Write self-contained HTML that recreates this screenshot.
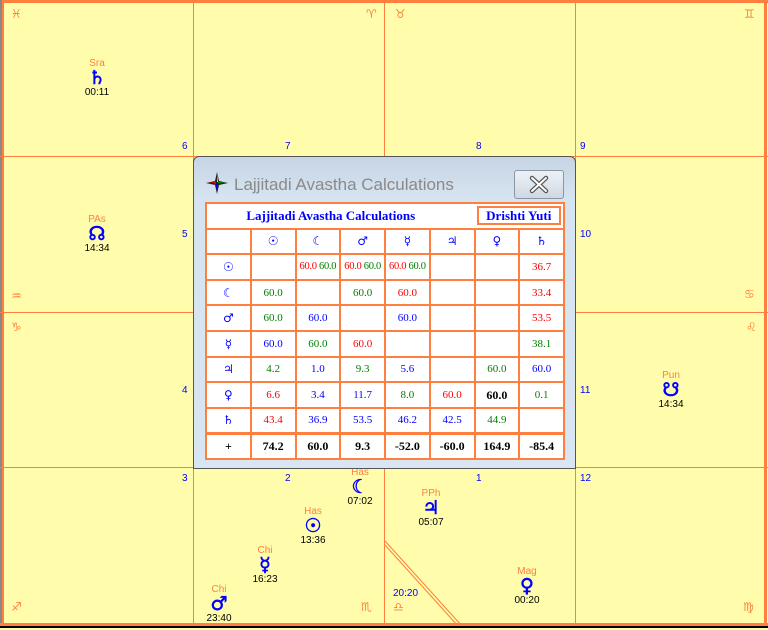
<!DOCTYPE html>
<html><head><meta charset="utf-8"><style>
*{margin:0;padding:0;box-sizing:border-box}
body{width:768px;height:628px;overflow:hidden;background:#fffdab;position:relative;font-family:"Liberation Sans","DejaVu Sans",sans-serif}
.l{position:absolute;background:#ff7f3f}
.t{position:absolute;transform:translateX(-50%);white-space:nowrap;text-align:center}
.n{position:absolute;font-size:10px;color:#0000ff}
.s{position:absolute;color:#ff8040;font-size:12px;font-family:"DejaVu Sans",sans-serif}
.lab{font-size:10px;color:#ff8040;line-height:11px}
.pl{font-size:19px;color:#0000ff;font-weight:bold;font-family:"DejaVu Sans",sans-serif;line-height:18px;-webkit-text-stroke:0.6px #0000ff}
.tm{font-size:10px;color:#000;line-height:12px}
#dlg{position:absolute;left:193px;top:156px;width:383px;height:313px;background:linear-gradient(#c6d4e4,#d6e3f0 40px,#d8e5f2);border:1px solid #555;border-radius:6px 6px 0 0}
table{position:absolute;left:11px;top:45px;border-collapse:collapse;background:#fff;font-family:"Liberation Serif","DejaVu Serif",serif;table-layout:fixed;width:360px}
td{border:2px solid #ff7f3f;height:25.6px;text-align:center;font-size:11px;padding:0;line-height:12px;white-space:nowrap;overflow:hidden}
.r{color:#ff0000}.g{color:#008000}.b{color:#0000ff}.k{color:#000;font-weight:bold;font-size:12px}
.sy{color:#0000ff;font-family:"DejaVu Sans",sans-serif;font-size:12px}
.sm{font-size:10.5px;letter-spacing:-0.3px}
</style></head><body>
<div class="l" style="left:0;top:0;width:768px;height:3px"></div>
<div class="l" style="left:0;top:0;width:2px;height:628px;background:#888"></div>
<div class="l" style="left:2px;top:0;width:2px;height:626px"></div>
<div class="l" style="left:764px;top:0;width:3px;height:626px"></div>
<div class="l" style="left:0;top:623px;width:768px;height:3px"></div>
<div class="l" style="left:0;top:626px;width:768px;height:2px;background:#000"></div>
<div class="l" style="left:193px;top:0;width:1px;height:626px"></div>
<div class="l" style="left:384px;top:0;width:1px;height:626px"></div>
<div class="l" style="left:575px;top:0;width:1px;height:626px"></div>
<div class="l" style="left:0;top:156px;width:768px;height:1px"></div>
<div class="l" style="left:0;top:312px;width:768px;height:1px"></div>
<div class="l" style="left:0;top:467px;width:768px;height:1px"></div>
<svg style="position:absolute;left:384px;top:540px" width="80" height="90"><path d="M1 5 L74 86 M1 1 L78 86" stroke="#ff7f3f" stroke-width="1" fill="none"/></svg>

<div class="s" style="left:11px;top:7px">♓</div>
<div class="s" style="left:366px;top:7px">♈</div>
<div class="s" style="left:395px;top:7px">♉</div>
<div class="s" style="left:744px;top:7px">♊</div>
<div class="s" style="left:11px;top:289px">♒</div>
<div class="s" style="left:744px;top:287px">♋</div>
<div class="s" style="left:11px;top:320px">♑</div>
<div class="s" style="left:746px;top:320px">♌</div>
<div class="s" style="left:11px;top:600px">♐</div>
<div class="s" style="left:361px;top:600px">♏</div>
<div class="s" style="left:393px;top:600px">♎</div>
<div class="s" style="left:743px;top:600px">♍</div>

<div class="n" style="left:182px;top:141px">6</div>
<div class="n" style="left:285px;top:141px">7</div>
<div class="n" style="left:476px;top:141px">8</div>
<div class="n" style="left:580px;top:141px">9</div>
<div class="n" style="left:182px;top:229px">5</div>
<div class="n" style="left:580px;top:229px">10</div>
<div class="n" style="left:182px;top:385px">4</div>
<div class="n" style="left:580px;top:385px">11</div>
<div class="n" style="left:182px;top:473px">3</div>
<div class="n" style="left:285px;top:473px">2</div>
<div class="n" style="left:476px;top:473px">1</div>
<div class="n" style="left:580px;top:473px">12</div>
<div class="n" style="left:393px;top:588px">20:20</div>

<div class="t" style="left:97px;top:58px"><div class="lab">Sra</div><div class="pl">♄</div><div class="tm">00:11</div></div>
<div class="t" style="left:97px;top:214px"><div class="lab">PAs</div><div class="pl">☊</div><div class="tm">14:34</div></div>
<div class="t" style="left:671px;top:370px"><div class="lab">Pun</div><div class="pl">☋</div><div class="tm">14:34</div></div>
<div class="t" style="left:360px;top:467px"><div class="lab">Has</div><div class="pl">☾</div><div class="tm">07:02</div></div>
<div class="t" style="left:313px;top:506px"><div class="lab">Has</div><div class="pl">☉</div><div class="tm">13:36</div></div>
<div class="t" style="left:265px;top:545px"><div class="lab">Chi</div><div class="pl">☿</div><div class="tm">16:23</div></div>
<div class="t" style="left:219px;top:584px"><div class="lab">Chi</div><div class="pl">♂</div><div class="tm">23:40</div></div>
<div class="t" style="left:431px;top:488px"><div class="lab">PPh</div><div class="pl">♃</div><div class="tm">05:07</div></div>
<div class="t" style="left:527px;top:566px"><div class="lab">Mag</div><div class="pl">♀</div><div class="tm">00:20</div></div>

<div id="dlg">
<svg style="position:absolute;left:11px;top:14px" width="24" height="24"><path d="M12 1 L14 10 L23 12 L14 14 L12 23 L10 14 L1 12 L10 10Z" fill="#222"/><path d="M12 3 L13 11 L12 11Z" fill="#ff0"/><path d="M13 11 L21 12 L13 12Z" fill="#0a0"/><path d="M12 13 L12 21 L11 13Z" fill="#00f"/><path d="M11 12 L3 12 L11 11Z" fill="#f00"/><path d="M10 10 L11 12 L10 14 L9 12Z" fill="#f00"/></svg>
<div style="position:absolute;left:40px;top:18px;font-size:17px;color:#8a8a8a">Lajjitadi Avastha Calculations</div>
<div style="position:absolute;left:320px;top:13px;width:50px;height:29px;border:1px solid #8a96a6;border-radius:3px;background:linear-gradient(#eef2f7,#cfd8e3)"><svg width="48" height="27"><path d="M17 7 L31 20 M31 7 L17 20" stroke="#555" stroke-width="4.5" stroke-linecap="round"/><path d="M17 7 L31 20 M31 7 L17 20" stroke="#fff" stroke-width="2" stroke-linecap="round"/></svg></div>
<table>
<tr><td colspan="6" style="height:24px;border-right:none;color:#0000ff;font-weight:bold;font-size:13px;padding-right:20px">Lajjitadi Avastha Calculations</td><td colspan="2" style="border-left:none;padding:1px 2px 1px 2px"><div style="border:2px solid #ff7f3f;color:#0000ff;font-weight:bold;font-size:13px;height:19px;line-height:15px">Drishti Yuti</div></td></tr>
<tr><td></td><td class="sy">☉</td><td class="sy">☾</td><td class="sy">♂</td><td class="sy">☿</td><td class="sy">♃</td><td class="sy">♀</td><td class="sy">♄</td></tr>
<tr><td class="sy">☉</td><td></td><td class="sm"><span class="r">60.0</span> <span class="g">60.0</span></td><td class="sm"><span class="r">60.0</span> <span class="g">60.0</span></td><td class="sm"><span class="r">60.0</span> <span class="g">60.0</span></td><td></td><td></td><td class="r">36.7</td></tr>
<tr><td class="sy">☾</td><td class="g">60.0</td><td></td><td class="g">60.0</td><td class="r">60.0</td><td></td><td></td><td class="r">33.4</td></tr>
<tr><td class="sy">♂</td><td class="g">60.0</td><td class="b">60.0</td><td></td><td class="b">60.0</td><td></td><td></td><td class="r">53.5</td></tr>
<tr><td class="sy">☿</td><td class="b">60.0</td><td class="g">60.0</td><td class="r">60.0</td><td></td><td></td><td></td><td class="g">38.1</td></tr>
<tr><td class="sy">♃</td><td class="g">4.2</td><td class="b">1.0</td><td class="g">9.3</td><td class="b">5.6</td><td></td><td class="g">60.0</td><td class="b">60.0</td></tr>
<tr><td class="sy">♀</td><td class="r">6.6</td><td class="b">3.4</td><td class="b">11.7</td><td class="g">8.0</td><td class="r">60.0</td><td class="k">60.0</td><td class="g">0.1</td></tr>
<tr><td class="sy">♄</td><td class="r">43.4</td><td class="b">36.9</td><td class="b">53.5</td><td class="b">46.2</td><td class="b">42.5</td><td class="g">44.9</td><td></td></tr>
<tr style="border-top:3px solid #ff7f3f"><td class="k" style="height:24px">+</td><td class="k">74.2</td><td class="k">60.0</td><td class="k">9.3</td><td class="k">-52.0</td><td class="k">-60.0</td><td class="k">164.9</td><td class="k">-85.4</td></tr>
</table>
</div>
</body></html>
